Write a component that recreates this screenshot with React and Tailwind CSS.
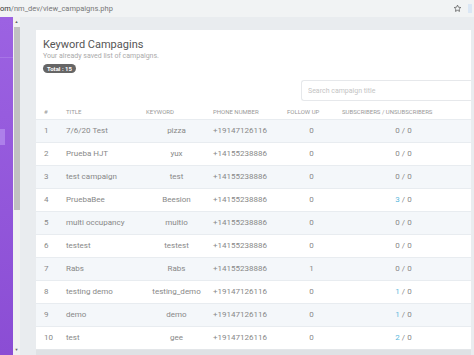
import React from 'react'

const campaigns = [
  { id: 1, title: '7/6/20 Test', keyword: 'pizza', phone: '+19147126116', follow: 0, subs: 0, unsubs: 0 },
  { id: 2, title: 'Prueba HJT', keyword: 'yux', phone: '+14155238886', follow: 0, subs: 0, unsubs: 0 },
  { id: 3, title: 'test campaign', keyword: 'test', phone: '+14155238886', follow: 0, subs: 0, unsubs: 0 },
  { id: 4, title: 'PruebaBee', keyword: 'Beesion', phone: '+14155238886', follow: 0, subs: 3, unsubs: 0 },
  { id: 5, title: 'multi occupancy', keyword: 'multio', phone: '+14155238886', follow: 0, subs: 0, unsubs: 0 },
  { id: 6, title: 'testest', keyword: 'testest', phone: '+14155238886', follow: 0, subs: 0, unsubs: 0 },
  { id: 7, title: 'Rabs', keyword: 'Rabs', phone: '+14155238886', follow: 1, subs: 0, unsubs: 0 },
  { id: 8, title: 'testing demo', keyword: 'testing_demo', phone: '+19147126116', follow: 0, subs: 1, unsubs: 0 },
  { id: 9, title: 'demo', keyword: 'demo', phone: '+19147126116', follow: 0, subs: 1, unsubs: 0 },
  { id: 10, title: 'test', keyword: 'gee', phone: '+19147126116', follow: 0, subs: 2, unsubs: 0 },
]

const cols = 'grid grid-cols-[24px_80px_67px_74px_55px_1fr]'

const App = () => {
  return (
    <div className="w-[474px] h-[355px] overflow-hidden flex flex-col font-['Roboto',sans-serif]">
      {/* Browser address bar */}
      <div className="h-[17px] shrink-0 bg-[#f1f3f4] flex items-center justify-between pr-[2px]">
        <div className="text-[7.5px] leading-none text-[#777]">
          <span className="text-[#333]">om</span>/nm_dev/view_campaigns.php
        </div>
        <div className="flex items-center gap-[6px]">
          <svg width="9" height="9" viewBox="0 0 24 24" fill="none" stroke="#555" strokeWidth="2" strokeLinejoin="round">
            <path d="M12 3l2.7 5.6 6.1.8-4.5 4.2 1.1 6.1L12 16.8l-5.4 2.9 1.1-6.1-4.5-4.2 6.1-.8z" />
          </svg>
          <div className="w-[4px] h-[9px] bg-[#dbe7f5]"></div>
        </div>
      </div>

      <div className="flex flex-1 min-h-0">
        {/* Sidebar */}
        <div className="w-[13px] shrink-0 bg-gradient-to-b from-[#9c62e2] to-[#8b4dd4] flex flex-col">
          <div className="h-[41px] border-b border-[#a774e6]"></div>
          <div className="mt-[71px] w-[5px] h-[16px] bg-[#ad80ea]"></div>
        </div>

        {/* Page scrollbar */}
        <div className="w-[7px] shrink-0 bg-[#f1f1f1] flex flex-col items-center">
          <div className="h-[10px] flex items-center justify-center text-[4px] leading-none text-[#666]">▲</div>
          <div className="w-[6px] h-[183px] bg-[#c1c1c1]"></div>
          <div className="flex-1"></div>
          <div className="h-[10px] flex items-center justify-center text-[4px] leading-none text-[#666]">▼</div>
        </div>

        {/* Main */}
        <div className="flex-1 bg-[#e9ecef] flex flex-col pt-[13px] pl-[16px] pr-[3px]">
          <div className="bg-white flex-1 flex flex-col pt-[8px]">
            <div className="pl-[7px] flex flex-col items-start">
              <h1 className="text-[11px] leading-[13px] text-[#555]">Keyword Campagins</h1>
              <p className="mt-[1px] text-[7px] leading-[9px] text-[#aaa]">Your already saved list of campaigns.</p>
              <span className="mt-[3px] flex items-center h-[9px] px-[4px] rounded-full bg-[#666] text-white text-[6px] font-bold leading-none">
                Total : 15
              </span>
            </div>

            <div className="mt-[7px] flex justify-end">
              <input
                type="text"
                placeholder="Search campaign title"
                className="w-[170px] h-[21px] border border-[#e6e8eb] rounded-l-[3px] border-r-0 px-[6px] text-[7px] placeholder-[#c4c4c4] outline-none"
              />
            </div>

            {/* Table header */}
            <div className={`${cols} h-[18px] pt-[3px] items-center text-[6px] text-[#999] uppercase`}>
              <div className="pl-[8px]">#</div>
              <div className="pl-[6px]">Title</div>
              <div className="pl-[6px]">Keyword</div>
              <div className="pl-[6px]">Phone Number</div>
              <div className="pl-[6px]">Follow Up</div>
              <div className="pl-[6px]">Subscribers / Unsubscribers</div>
            </div>

            {/* Table rows */}
            <div className="flex flex-col">
              {campaigns.map((c, i) => (
                <div
                  key={c.id}
                  className={`${cols} h-[23px] items-center border-t border-[#e8ecf0] text-[8px] text-[#888] ${
                    i % 2 === 0 ? 'bg-[#f4f7fa]' : 'bg-white'
                  }`}
                >
                  <div className="pl-[8px]">{c.id}</div>
                  <div className="pl-[6px] whitespace-nowrap">{c.title}</div>
                  <div className="pl-[6px] text-center whitespace-nowrap">{c.keyword}</div>
                  <div className="pl-[6px]">{c.phone}</div>
                  <div className="pl-[6px] text-center">{c.follow}</div>
                  <div className="pl-[6px] pr-[6px] text-center">
                    <span className={c.subs > 0 ? 'text-[#5bb8dc]' : ''}>{c.subs}</span> / {c.unsubs}
                  </div>
                </div>
              ))}
            </div>
            <div className="flex-1 border-t border-[#e3e6e9] bg-[#dfe2e5]"></div>
          </div>
        </div>
      </div>
    </div>
  )
}

export default App
